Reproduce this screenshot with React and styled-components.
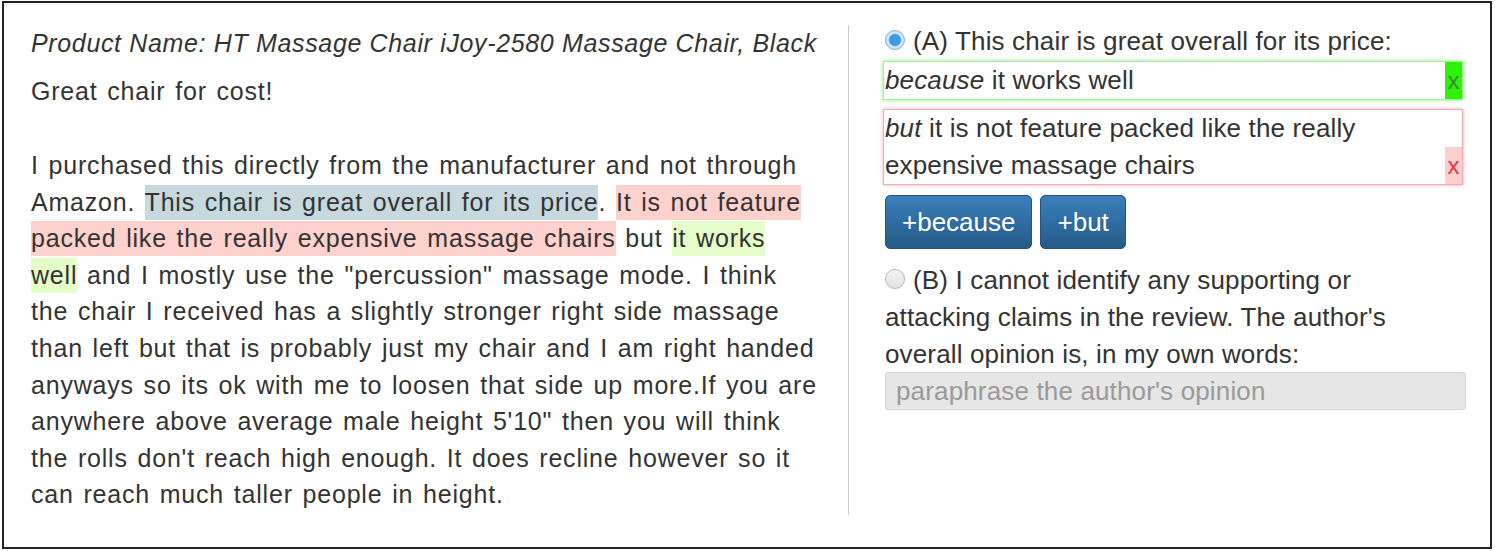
import React from 'react';
import styled, { createGlobalStyle } from 'styled-components';

const GlobalStyle = createGlobalStyle`
  html, body {
    margin: 0;
    padding: 0;
    background: #ffffff;
  }
  body {
    padding: 1px 3px 0 2px;
    font-family: "Liberation Sans", Arial, sans-serif;
    color: #333333;
  }
`

const Frame = styled.div`
  box-sizing: border-box;
  height: 548px;
  border: 2px solid #222222;
  display: flex;
  padding: 20px 0 0 0;
`

const ReviewColumn = styled.div`
  box-sizing: border-box;
  width: 845px;
  padding: 0 16px 0 27px;
  border-right: 1px solid #cccccc;
  height: 490px;
  margin-top: 2px;
  font-size: 25px;
  letter-spacing: 0.8px;
  word-spacing: 2px;
  line-height: 36.6px;
`

const ProductName = styled.div`
  font-style: italic;
  letter-spacing: 0.65px;
  word-spacing: 0;
  line-height: 40px;
  margin-top: -2px;
`

const Title = styled.div`
  margin-top: 8px;
  line-height: 40px;
`

const ReviewText = styled.p`
  margin: 36px 0 0 0;
  white-space: nowrap;
`

const Mark = styled.span`
  padding: 3px 0 4px;
  background: ${p => p.tone === 'claim' ? '#c5d9df' : p.tone === 'but' ? '#fdd1cc' : '#e5fdc8'};
`

const AnswerColumn = styled.div`
  box-sizing: border-box;
  flex: 1;
  padding: 0 24px 0 36px;
  font-size: 26px;
  letter-spacing: 0.15px;
  line-height: 37px;
`

const Option = styled.label`
  display: block;
  max-width: ${p => p.narrow ? '568px' : 'none'};
`

const Radio = styled.span`
  display: inline-block;
  box-sizing: border-box;
  width: 20px;
  height: 20px;
  border-radius: 50%;
  vertical-align: 0;
  margin-right: 8px;
  border: 1px solid ${p => p.checked ? '#79b4e6' : '#b5b5b5'};
  background: ${p => p.checked
    ? 'radial-gradient(circle, #3e9be6 0 5.5px, #cfe5f7 6.5px 100%)'
    : 'linear-gradient(#f4f4f4, #e2e2e2)'};
`

const Reason = styled.div`
  display: flex;
  margin: ${p => p.kind === 'because' ? '1px 0 0 -2px' : '9px 0 0 -2px'};
  width: 578px;
  background: #ffffff;
  border: 1px solid ${p => p.kind === 'because' ? '#9ef28f' : '#f7a9b1'};
  box-shadow: 0 0 4px ${p => p.kind === 'because' ? 'rgba(60, 230, 40, 0.6)' : 'rgba(250, 110, 130, 0.55)'};
`

const ReasonText = styled.div`
  flex: 1;
  padding: 0 0 0 1px;
`

const Remove = styled.span`
  align-self: flex-end;
  width: 17px;
  height: 37px;
  line-height: 37px;
  text-align: center;
  font-size: 24px;
  background: ${p => p.kind === 'because' ? '#2ff20a' : '#fbcfcc'};
  color: ${p => p.kind === 'because' ? '#3a8c3a' : '#f0304a'};
`

const ButtonRow = styled.div`
  display: flex;
  gap: 8px;
  margin-top: 10px;
`

const AddButton = styled.button`
  height: 54px;
  padding: 0 16px;
  border: 1px solid #245580;
  border-radius: 5px;
  background: linear-gradient(#3a7fbc, #265a88);
  color: #ffffff;
  font-family: inherit;
  font-size: 26px;
  cursor: pointer;
`

const OptionB = styled(Option)`
  margin-top: 13px;
`

const Paraphrase = styled.input`
  box-sizing: border-box;
  display: block;
  width: 581px;
  height: 38px;
  margin-top: -1px;
  padding: 0 10px;
  border: 1px solid #d4d4d4;
  border-radius: 3px;
  background: #e6e6e6;
  font-family: inherit;
  font-size: 26px;
  letter-spacing: 0.15px;
  color: #999999;
  &::placeholder {
    color: #9a9a9a;
  }
`

function App() {
  return (
    <>
      <GlobalStyle />
      <Frame>
        <ReviewColumn>
          <ProductName>Product Name: HT Massage Chair iJoy-2580 Massage Chair, Black</ProductName>
          <Title>Great chair for cost!</Title>
          <ReviewText>
            {'I purchased this directly from the manufacturer and not through'}<br />
            {'Amazon. '}<Mark tone="claim">This chair is great overall for its price</Mark>{'. '}
            <Mark tone="but">It is not feature<br />packed like the really expensive massage chairs</Mark>{' but '}
            <Mark tone="because">it works<br />well</Mark>
            {' and I mostly use the "percussion" massage mode. I think'}<br />
            {'the chair I received has a slightly stronger right side massage'}<br />
            {'than left but that is probably just my chair and I am right handed'}<br />
            {'anyways so its ok with me to loosen that side up more.If you are'}<br />
            {'anywhere above average male height 5\'10" then you will think'}<br />
            {'the rolls don\'t reach high enough. It does recline however so it'}<br />
            {'can reach much taller people in height.'}
          </ReviewText>
        </ReviewColumn>
        <AnswerColumn>
          <Option>
            <Radio checked />(A) This chair is great overall for its price:
          </Option>
          <Reason kind="because">
            <ReasonText><i>because</i> it works well</ReasonText>
            <Remove kind="because">x</Remove>
          </Reason>
          <Reason kind="but">
            <ReasonText><i>but</i> it is not feature packed like the really expensive massage chairs</ReasonText>
            <Remove kind="but">x</Remove>
          </Reason>
          <ButtonRow>
            <AddButton>+because</AddButton>
            <AddButton>+but</AddButton>
          </ButtonRow>
          <OptionB narrow>
            <Radio />(B) I cannot identify any supporting or attacking claims in the review. The author's
            overall opinion is, in my own words:
          </OptionB>
          <Paraphrase disabled placeholder="paraphrase the author's opinion" />
        </AnswerColumn>
      </Frame>
    </>
  );
}

export default App;
